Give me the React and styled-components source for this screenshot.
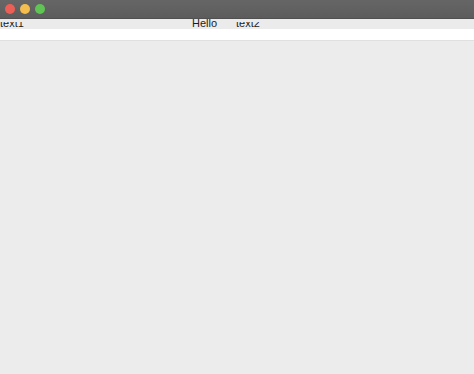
import React from "react";
import styled, { createGlobalStyle } from "styled-components";

const GlobalStyle = createGlobalStyle`
  html, body {
    margin: 0;
    padding: 0;
    height: 100%;
    background: #ececec;
  }
  #root {
    height: 100%;
  }
`;

const Window = styled.div`
  height: 374px;
  width: 474px;
  display: flex;
  flex-direction: column;
  background: #ececec;
  font-family: "Liberation Sans", Arial, sans-serif;
  overflow: hidden;
`;

const TitleBar = styled.div`
  height: 18px;
  flex: none;
  display: flex;
  align-items: center;
  gap: 5px;
  padding-left: 5px;
  background: linear-gradient(#666666, #5c5c5c);
  border-bottom: 1px solid #505050;
`;

const Light = styled.span`
  width: 10px;
  height: 10px;
  border-radius: 50%;
  background: ${(props) => props.color};
`;

const TextRow = styled.div`
  height: 10px;
  flex: none;
  display: flex;
  align-items: flex-end;
  background: #ebebeb;
  overflow: hidden;
  font-size: 11px;
  line-height: 11px;
  color: #1c1c1c;
`;

const Cell = styled.div`
  width: ${(props) => props.width}px;
  height: ${(props) => (props.clipped ? 7 : 10)}px;
  flex: none;
  display: flex;
  align-items: flex-end;
  overflow: hidden;
`;

const Label = styled.span`
  display: block;
  white-space: nowrap;
`;

const WhiteBand = styled.div`
  height: 11px;
  flex: none;
  background: #ffffff;
  border-bottom: 1px solid #e0e0e0;
`;

const Content = styled.div`
  flex: 1;
  background: #ececec;
`;

const App = () => (
  <>
    <GlobalStyle />
    <Window>
      <TitleBar>
        <Light color="#ec5f57" />
        <Light color="#f4be4f" />
        <Light color="#5fc454" />
      </TitleBar>
      <TextRow>
        <Cell width={192} clipped>
          <Label>text1</Label>
        </Cell>
        <Cell width={44}>
          <Label>Hello</Label>
        </Cell>
        <Cell width={40} clipped>
          <Label>text2</Label>
        </Cell>
      </TextRow>
      <WhiteBand />
      <Content />
    </Window>
  </>
);

export default App;
